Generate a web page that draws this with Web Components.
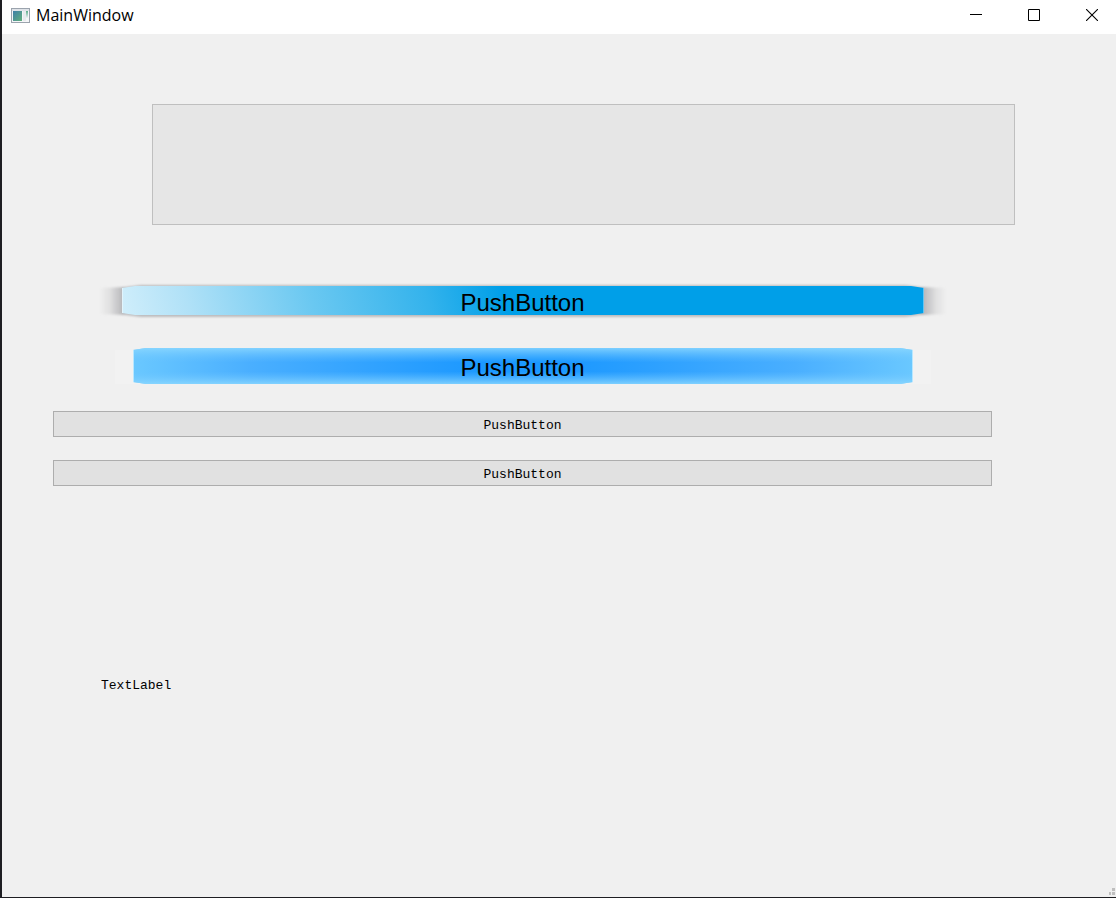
<!DOCTYPE html>
<html lang="en">
<head>
<meta charset="utf-8">
<title>MainWindow</title>
<style>
html, body { height: 100%; margin: 0; }
body { font-family: "Liberation Mono", monospace; font-size: 13px; color: #000; background: #f0f0f0; }
</style>
</head>
<body>
<main-window></main-window>
<script>
function define(name, markup) {
  customElements.define(name, class extends HTMLElement {
    constructor() {
      super();
      this.attachShadow({ mode: "open" }).innerHTML = markup;
    }
  });
}

define("title-bar", `
<style>
:host { display: flex; align-items: center; height: 34px; background: #fff; flex: none; }
.icon { width: 19px; height: 15px; margin: 0 6px 4px 9px; flex: none; }
h1 { flex: 1; margin: 0 0 4px; font: 16px/24px "Open Sans", sans-serif; }
button { width: 58px; height: 30px; margin: 0 0 4px; padding: 0; border: 0; background: none; display: grid; place-items: center; flex: none; }
button svg { display: block; }
.min, .max { padding-left: 10px; }
.close { padding-left: 10px; }
</style>
<svg class="icon" viewBox="0 0 19 15" aria-hidden="true">
  <defs><linearGradient id="g" x2="1" y2="1"><stop stop-color="#3f7fa8"/><stop offset="1" stop-color="#62b07c"/></linearGradient>
  <linearGradient id="h" x2="0" y2="1"><stop stop-color="#5cae8c"/><stop offset="1" stop-color="#eef3f4"/></linearGradient></defs>
  <rect x=".5" y=".5" width="18" height="14" fill="#f5f6f8" stroke="#9ba3ad"/>
  <rect x="1" y="1" width="17" height="2" fill="#dfe3e8"/>
  <rect x="2" y="3" width="9" height="10" fill="url(#g)"/>
  <rect x="12" y="3" width="3" height="10" fill="#e7eaed"/>
  <rect x="15" y="3" width="2" height="7" fill="url(#h)"/>
</svg>
<h1><slot></slot></h1>
<button class="min" aria-label="Minimize"><svg width="12" height="12"><path d="M0 5.5h12" stroke="#000"/></svg></button>
<button class="max" aria-label="Maximize"><svg width="12" height="12"><path d="M.5.5h11v11H.5z" fill="none" stroke="#000"/></svg></button>
<button class="close" aria-label="Close"><svg width="12" height="12"><path d="M0 0l12 12M12 0L0 12" stroke="#000" stroke-width="1.1"/></svg></button>
`);

define("push-button", `
<style>
:host { display: block; }
button { display: block; box-sizing: border-box; width: 100%; height: 26px; margin: 0; padding: 2px 0 0; border: 1px solid #adadad; background: #e1e1e1; font: inherit; color: inherit; text-align: center; }
:host([large]) button { height: 121px; background: #e6e6e6; border-color: #bfbfbf; }
</style>
<button><slot></slot></button>
`);

const glossyStyle = `
:host { display: block; }
button { display: grid; width: 100%; height: 48px; margin: 0; padding: 0; border: 0; background: none; color: inherit; font: 24px/52px "Liberation Sans", sans-serif; }
svg, span { grid-area: 1 / 1; width: 100%; height: 48px; }
span { position: relative; text-align: center; }
`;

define("sky-button", `
<style>${glossyStyle}</style>
<button>
<svg viewBox="0 0 939 48" preserveAspectRatio="none" aria-hidden="true">
  <defs>
    <linearGradient id="fill" gradientUnits="userSpaceOnUse" x1="68" y1="36" x2="430" y2="-60">
      <stop stop-color="#d0eefb"/><stop offset=".18" stop-color="#b0e1f7"/><stop offset=".5" stop-color="#6ac8f1"/><stop offset=".8" stop-color="#34b3ec"/><stop offset="1" stop-color="#009fe8"/>
    </linearGradient>
    <linearGradient id="left"><stop stop-color="#b4b4b6" stop-opacity="0"/><stop offset=".4" stop-color="#b4b4b6" stop-opacity=".25"/><stop offset="1" stop-color="#b0b0b4"/></linearGradient>
    <linearGradient id="right"><stop stop-color="#b0b0b4"/><stop offset=".6" stop-color="#b4b4b6" stop-opacity=".25"/><stop offset="1" stop-color="#b4b4b6" stop-opacity="0"/></linearGradient>
    <filter id="soft" x="-5%" y="-20%" width="110%" height="140%"><feGaussianBlur stdDeviation="1 1"/></filter>
  </defs>
  <g filter="url(#soft)">
    <path d="M46 11L72 10V38L46 37z" fill="url(#left)"/>
    <path d="M868 10L894 11V37L868 38z" fill="url(#right)"/>
    <path d="M72 10L88 8H852L868 10V38L852 40H88L72 38z" fill="#bcbcbe"/>
  </g>
  <path d="M69 11L82 9H858L871 11V36L858 38H82L69 36z" fill="url(#fill)"/>
  <path d="M69.500 11V36M870.500 11V36" stroke="#fff" stroke-opacity=".4"/>
</svg>
<span><slot></slot></span>
</button>`);

define("ocean-button", `
<style>${glossyStyle}</style>
<button>
<svg viewBox="0 0 939 48" preserveAspectRatio="none" aria-hidden="true">
  <defs>
    <linearGradient id="fill"><stop stop-color="#6ac8ff"/><stop offset=".15" stop-color="#4aafff"/><stop offset=".3" stop-color="#32a3ff"/><stop offset=".45" stop-color="#1b98ff"/><stop offset=".55" stop-color="#1b98ff"/><stop offset=".7" stop-color="#32a3ff"/><stop offset=".85" stop-color="#4aafff"/><stop offset="1" stop-color="#6ac8ff"/></linearGradient>
    <linearGradient id="edge" x2="0" y2="1"><stop stop-color="#8cd8ff" stop-opacity=".85"/><stop offset=".4" stop-color="#6cc4ff" stop-opacity="0"/><stop offset=".65" stop-color="#6cc4ff" stop-opacity="0"/><stop offset="1" stop-color="#8cd8ff" stop-opacity=".85"/></linearGradient>
  </defs>
  <path d="M62 8H878V42H62z" fill="#f2f2f2"/>
  <path d="M80 8L93 6H847L860 8V40L847 42H93L80 40z" fill="url(#fill)"/>
  <path d="M80 8L93 6H847L860 8V40L847 42H93L80 40z" fill="url(#edge)"/>
  <path d="M80.500 8V40M859.500 8V40" stroke="#b8e7ff"/>
</svg>
<span><slot></slot></span>
</button>`);

define("size-grip", `
<style>:host { display: block; width: 6px; height: 7px; } svg { display: block; }</style>
<svg width="6" height="7" aria-hidden="true"><path d="M3 0h3v3H3zM0 4h2v3H0zM3 4h3v3H3z" fill="#bfbfbf"/></svg>
`);

define("main-window", `
<style>
:host { display: flex; flex-direction: column; box-sizing: border-box; min-height: 100vh; border-left: 2px solid #1e1e22; border-bottom: 1px solid #1e1e22; background: #f0f0f0; }
main { flex: 1; padding-top: 70px; }
.display { margin: 0 101px 0 150px; }
.stack { display: grid; margin: 52px 124px 0 51px; }
.stack sky-button { margin-bottom: 17px; }
.stack ocean-button { margin-bottom: 21px; }
.plain { display: grid; gap: 23px; }
p { margin: 190px 0 0 99px; line-height: 20px; }
size-grip { align-self: flex-end; margin: 0 1px 2px 0; }
</style>
<title-bar>MainWindow</title-bar>
<main>
  <push-button class="display" large></push-button>
  <div class="stack">
    <sky-button>PushButton</sky-button>
    <ocean-button>PushButton</ocean-button>
    <div class="plain">
      <push-button>PushButton</push-button>
      <push-button>PushButton</push-button>
    </div>
  </div>
  <p>TextLabel</p>
</main>
<size-grip></size-grip>
`);
</script>
</body>
</html>
